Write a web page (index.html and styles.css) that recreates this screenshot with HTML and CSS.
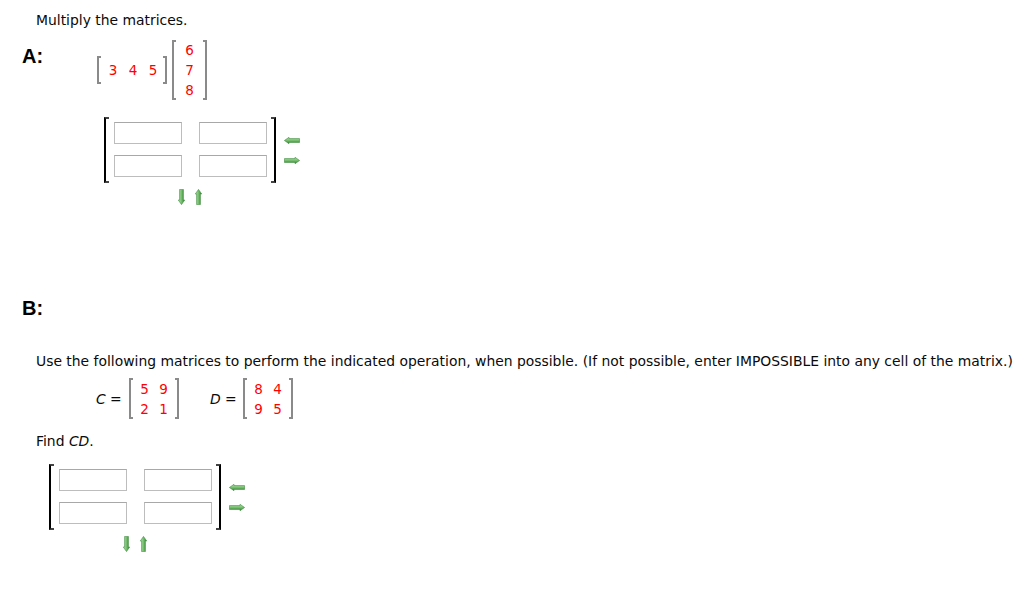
FILE: index.html
```html
<!DOCTYPE html>
<html>
<head>
<meta charset="utf-8">
<link rel="stylesheet" href="styles.css">
</head>
<body>
<svg class="svg-defs" width="0" height="0" aria-hidden="true">
  <defs>
    <linearGradient id="gh" x1="0" y1="0" x2="0" y2="1">
      <stop offset="0" stop-color="#b6e3b0"/>
      <stop offset="0.45" stop-color="#7cc474"/>
      <stop offset="1" stop-color="#2f7d2f"/>
    </linearGradient>
    <linearGradient id="gv" x1="0" y1="0" x2="1" y2="0">
      <stop offset="0" stop-color="#b6e3b0"/>
      <stop offset="0.45" stop-color="#7cc474"/>
      <stop offset="1" stop-color="#2f7d2f"/>
    </linearGradient>
  </defs>
</svg>

<p class="prompt first">Multiply the matrices.</p>

<section class="part">
  <div class="label">A:</div>
  <div class="work">
    <div class="expr">
      <div class="mat given rowvec">
        <span class="br l"></span>
        <div class="cells cols3">
          <span>3</span><span>4</span><span>5</span>
        </div>
        <span class="br r"></span>
      </div>
      <div class="mat given colvec">
        <span class="br l"></span>
        <div class="cells cols1">
          <span>6</span><span>7</span><span>8</span>
        </div>
        <span class="br r"></span>
      </div>
    </div>

    <div class="answer ans-a">
      <div class="mat entry">
        <span class="br l"></span>
        <div class="inputs">
          <input type="text"><input type="text">
          <input type="text"><input type="text">
        </div>
        <span class="br r"></span>
      </div>
      <div class="side-arrows">
        <svg width="16" height="7" viewBox="0 0 16 7"><path d="M0.4 3.5 L5 0.3 V1.6 H15.6 V5.4 H5 V6.7 Z" fill="url(#gh)" stroke="#3d8a3d" stroke-width="0.6"/></svg>
        <svg width="16" height="7" viewBox="0 0 16 7"><path d="M15.6 3.5 L11 0.3 V1.6 H0.4 V5.4 H11 V6.7 Z" fill="url(#gh)" stroke="#3d8a3d" stroke-width="0.6"/></svg>
      </div>
      <div class="bottom-arrows">
        <svg width="7" height="16" viewBox="0 0 7 16"><path d="M3.5 15.6 L0.3 11 H1.6 V0.4 H5.4 V11 H6.7 Z" fill="url(#gv)" stroke="#3d8a3d" stroke-width="0.6"/></svg>
        <svg width="7" height="16" viewBox="0 0 7 16"><path d="M3.5 0.4 L0.3 5 H1.6 V15.6 H5.4 V5 H6.7 Z" fill="url(#gv)" stroke="#3d8a3d" stroke-width="0.6"/></svg>
      </div>
    </div>
  </div>
</section>

<div class="label label-b">B:</div>

<p class="prompt use">Use the following matrices to perform the indicated operation, when possible. (If not possible, enter IMPOSSIBLE into any cell of the matrix.)</p>

<div class="defs">
  <span class="lbl"><i>C</i> =</span>
  <div class="mat given sq">
    <span class="br l"></span>
    <div class="cells cols2">
      <span>5</span><span>9</span><span>2</span><span>1</span>
    </div>
    <span class="br r"></span>
  </div>
  <span class="lbl lbl-d"><i>D</i> =</span>
  <div class="mat given sq">
    <span class="br l"></span>
    <div class="cells cols2">
      <span>8</span><span>4</span><span>9</span><span>5</span>
    </div>
    <span class="br r"></span>
  </div>
</div>

<p class="prompt find">Find <i>CD</i>.</p>

<div class="answer ans-b">
  <div class="mat entry">
    <span class="br l"></span>
    <div class="inputs">
      <input type="text"><input type="text">
      <input type="text"><input type="text">
    </div>
    <span class="br r"></span>
  </div>
  <div class="side-arrows">
    <svg width="16" height="7" viewBox="0 0 16 7"><path d="M0.4 3.5 L5 0.3 V1.6 H15.6 V5.4 H5 V6.7 Z" fill="url(#gh)" stroke="#3d8a3d" stroke-width="0.6"/></svg>
    <svg width="16" height="7" viewBox="0 0 16 7"><path d="M15.6 3.5 L11 0.3 V1.6 H0.4 V5.4 H11 V6.7 Z" fill="url(#gh)" stroke="#3d8a3d" stroke-width="0.6"/></svg>
  </div>
  <div class="bottom-arrows">
    <svg width="7" height="16" viewBox="0 0 7 16"><path d="M3.5 15.6 L0.3 11 H1.6 V0.4 H5.4 V11 H6.7 Z" fill="url(#gv)" stroke="#3d8a3d" stroke-width="0.6"/></svg>
    <svg width="7" height="16" viewBox="0 0 7 16"><path d="M3.5 0.4 L0.3 5 H1.6 V15.6 H5.4 V5 H6.7 Z" fill="url(#gv)" stroke="#3d8a3d" stroke-width="0.6"/></svg>
  </div>
</div>
</body>
</html>
```

FILE: styles.css
```css
* { box-sizing: border-box; }

html, body {
  margin: 0;
  padding: 0;
  background: #fff;
}

body {
  font-family: "DejaVu Sans", Verdana, sans-serif;
  font-size: 13.9px;
  line-height: 16px;
  color: #0a0a0a;
}

.svg-defs {
  display: block;
  width: 0;
  height: 0;
  overflow: hidden;
}

.prompt {
  margin: 0;
  padding-left: 36px;
  white-space: nowrap;
}

.prompt.first { padding-top: 12px; }
.prompt.use { margin-top: 33px; }
.prompt.find { margin-top: 14px; }

.part {
  display: flex;
  margin-top: 12px;
  padding-left: 22px;
}

.label {
  font-family: "Liberation Sans", Arial, sans-serif;
  font-weight: bold;
  font-size: 20px;
  line-height: 24px;
  color: #000;
}

.part .label {
  width: 75px;
  margin-top: 4px;
}

.label-b {
  margin-top: 91px;
  padding-left: 22px;
}

.work {
  display: flex;
  flex-direction: column;
  align-items: flex-start;
}

.expr {
  display: flex;
  align-items: center;
  gap: 5px;
}

/* matrices */
.mat {
  display: flex;
  align-items: stretch;
}

.br {
  display: block;
  width: 4px;
  border: 2px solid #8a8a8a;
}
.br.l { border-right: none; }
.br.r { border-left: none; }

.given .cells {
  display: grid;
  color: #ff0000;
  font-size: 13.5px;
  line-height: 20px;
  text-align: center;
}

.rowvec .cells {
  grid-template-columns: repeat(3, 20px);
  padding: 4px 0 4px 2px;
}

.colvec .cells {
  grid-template-columns: 27px;
}

.sq .cells {
  grid-template-columns: repeat(2, 19px);
  padding: 1px 2px 0 2px;
}

.defs {
  display: flex;
  align-items: center;
  margin-top: 9px;
  padding-left: 96px;
}

.lbl {
  width: 33px;
  white-space: nowrap;
}

.lbl-d { margin-left: 31px; }

/* answer matrices */
.answer {
  display: inline-grid;
  grid-template-columns: auto auto;
  align-items: center;
}

.ans-a {
  margin-top: 17px;
  margin-left: 7px;
}

.ans-b {
  margin-top: 15px;
  margin-left: 49px;
}

.entry .br {
  width: 5px;
  border-color: #444;
  border-width: 2px;
}
.entry .br.l { border-left-color: #000; border-right: none; }
.entry .br.r { border-right-color: #000; border-left: none; }

.inputs {
  display: grid;
  grid-template-columns: 68px 68px;
  column-gap: 17px;
  row-gap: 11px;
  padding: 5px 4px 6px 5px;
}

.inputs input {
  width: 68px;
  height: 22px;
  margin: 0;
  padding: 0;
  border: 1px solid #bdbdbd;
  border-top-color: #a8a8a8;
  background: #fff;
  font: inherit;
}

.side-arrows {
  display: flex;
  flex-direction: column;
  gap: 13px;
  margin-left: 8px;
}

.side-arrows svg, .bottom-arrows svg { display: block; }

.bottom-arrows {
  grid-column: 1;
  display: flex;
  justify-content: center;
  gap: 10px;
  margin-top: 6px;
}
```
